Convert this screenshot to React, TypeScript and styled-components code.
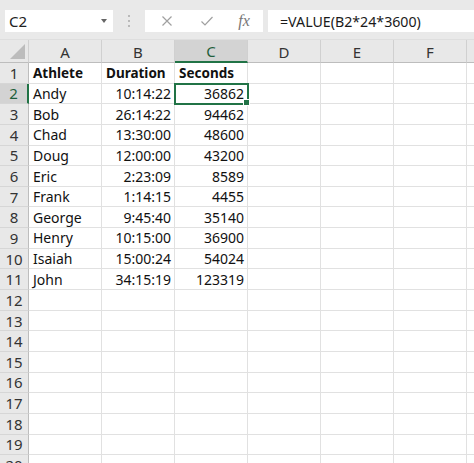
import React from "react";
import styled, { createGlobalStyle } from "styled-components";

const Global = createGlobalStyle`
  html, body { margin: 0; padding: 0; background: #ffffff; }
  body { font-family: "Noto Sans", "Open Sans", sans-serif; overflow: hidden; }
`;

const GREEN = "#217346";
const GRID = "#e1e1e1";
const HEAD_BG = "#e8e8e8";
const ROW_H = 20.65;

const Window = styled.div`
  width: 474px;
  height: 463px;
  overflow: hidden;
  display: flex;
  flex-direction: column;
  background: #fff;
`;

const Toolbar = styled.div`
  height: 40px;
  flex: none;
  background: #e9e9e9;
  display: flex;
  align-items: flex-start;
  padding: 10px 0 0 5px;
  box-sizing: border-box;
  border-bottom: 1px solid #dedede;
`;

const NameBox = styled.div`
  width: 108px;
  height: 22px;
  background: #fff;
  display: flex;
  align-items: center;
  justify-content: space-between;
  padding: 0 6px 0 4px;
  box-sizing: border-box;
  font-size: 15px;
  color: #222;
`;

const Caret = styled.span`
  width: 0;
  height: 0;
  border-left: 3.5px solid transparent;
  border-right: 3.5px solid transparent;
  border-top: 4px solid #666;
`;

const Grip = styled.div`
  width: 32px;
  height: 22px;
  display: flex;
  flex-direction: column;
  align-items: center;
  justify-content: center;
  gap: 3px;
  & > span {
    width: 2px;
    height: 2px;
    background: #a8a8a8;
    border-radius: 1px;
  }
`;

const FxButtons = styled.div`
  width: 118px;
  height: 22px;
  background: #fff;
  display: flex;
  align-items: center;
  box-sizing: border-box;
  margin-right: 5px;
`;

const FxIcon = styled.span<{ $x: number }>`
  width: ${(p) => p.$x}px;
  display: flex;
  justify-content: center;
  align-items: center;
  color: #9a9a9a;
  font-size: 15px;
`;

const FxText = styled.span`
  font-family: "Liberation Serif", "DejaVu Serif", serif;
  font-style: italic;
  font-size: 16px;
  color: #777;
`;

const FormulaInput = styled.div`
  flex: 1;
  height: 22px;
  background: #fff;
  display: flex;
  align-items: center;
  padding-left: 12px;
  font-size: 14.2px;
  color: #1a1a1a;
  white-space: nowrap;
`;

const Sheet = styled.div`
  display: grid;
  grid-template-columns: 29px repeat(7, 73px);
  grid-template-rows: 23px;
  grid-auto-rows: ${ROW_H}px;
  font-size: 14px;
  color: #111;
`;

const Corner = styled.div`
  background: ${HEAD_BG};
  border-right: 1px solid #d0d0d0;
  border-bottom: 1px solid #bdbdbd;
  position: relative;
  &::after {
    content: "";
    position: absolute;
    right: 3px;
    bottom: 3px;
    width: 0;
    height: 0;
    border-left: 15px solid transparent;
    border-bottom: 15px solid #bcbcbc;
  }
`;

const ColHeader = styled.div<{ $sel?: boolean }>`
  background: ${(p) => (p.$sel ? "#d3d3d3" : HEAD_BG)};
  border-right: 1px solid #d0d0d0;
  border-bottom: ${(p) => (p.$sel ? `2px solid ${GREEN}` : "1px solid #bdbdbd")};
  display: flex;
  align-items: center;
  justify-content: center;
  font-size: 15px;
  color: ${(p) => (p.$sel ? "#1f5f3c" : "#333")};
  box-sizing: border-box;
  padding-top: 1px;
`;

const RowHeader = styled.div<{ $sel?: boolean }>`
  background: ${(p) => (p.$sel ? "#d3d3d3" : HEAD_BG)};
  border-right: ${(p) => (p.$sel ? `2px solid ${GREEN}` : "1px solid #bdbdbd")};
  border-bottom: 1px solid #d6d6d6;
  display: flex;
  align-items: center;
  justify-content: center;
  font-size: 15px;
  color: ${(p) => (p.$sel ? "#1f5f3c" : "#333")};
  box-sizing: border-box;
`;

const Cell = styled.div<{ $num?: boolean; $bold?: boolean; $active?: boolean }>`
  border-right: 1px solid ${GRID};
  border-bottom: 1px solid ${GRID};
  display: flex;
  align-items: center;
  justify-content: ${(p) => (p.$num ? "flex-end" : "flex-start")};
  padding: 0 3px 0 4px;
  font-weight: ${(p) => (p.$bold ? 700 : 400)};
  font-size: ${(p) => (p.$bold ? "13.5px" : "14px")};
  white-space: nowrap;
  overflow: visible;
  box-sizing: border-box;
  position: relative;
  ${(p) =>
    p.$active
      ? `
    outline: 2px solid ${GREEN};
    outline-offset: -1px;
    z-index: 2;
    &::after {
      content: "";
      position: absolute;
      right: -3px;
      bottom: -3px;
      width: 5px;
      height: 5px;
      background: ${GREEN};
      border: 1px solid #fff;
    }
  `
      : ""}
`;

type Row = [string, string, string];
const data: Row[] = [
  ["Andy", "10:14:22", "36862"],
  ["Bob", "26:14:22", "94462"],
  ["Chad", "13:30:00", "48600"],
  ["Doug", "12:00:00", "43200"],
  ["Eric", "2:23:09", "8589"],
  ["Frank", "1:14:15", "4455"],
  ["George", "9:45:40", "35140"],
  ["Henry", "10:15:00", "36900"],
  ["Isaiah", "15:00:24", "54024"],
  ["John", "34:15:19", "123319"],
];

const cols = ["A", "B", "C", "D", "E", "F", "G"];

export default function App() {
  const rows: React.ReactNode[] = [];
  for (let r = 1; r <= 20; r++) {
    rows.push(
      <RowHeader key={`h${r}`} $sel={r === 2}>
        {r}
      </RowHeader>
    );
    cols.forEach((c, ci) => {
      let text = "";
      let num = false;
      let bold = false;
      if (r === 1) {
        if (ci === 0) text = "Athlete";
        if (ci === 1) text = "Duration";
        if (ci === 2) text = "Seconds";
        bold = ci < 3;
      } else if (r - 2 < data.length && ci < 3) {
        text = data[r - 2][ci];
        num = ci > 0;
      }
      rows.push(
        <Cell key={`${c}${r}`} $num={num} $bold={bold} $active={r === 2 && c === "C"}>
          {text}
        </Cell>
      );
    });
  }

  return (
    <Window>
      <Global />
      <Toolbar>
        <NameBox>
          <span>C2</span>
          <Caret />
        </NameBox>
        <Grip>
          <span />
          <span />
          <span />
        </Grip>
        <FxButtons>
          <FxIcon $x={44}>
            <svg width="12" height="12" viewBox="0 0 12 12">
              <path d="M1.5 1.5 L10.5 10.5 M10.5 1.5 L1.5 10.5" stroke="#a0a0a0" strokeWidth="1.2" fill="none" />
            </svg>
          </FxIcon>
          <FxIcon $x={36}>
            <svg width="14" height="12" viewBox="0 0 14 12">
              <path d="M1.5 6.5 L5 10 L12.5 2" stroke="#a0a0a0" strokeWidth="1.2" fill="none" />
            </svg>
          </FxIcon>
          <FxIcon $x={38}>
            <FxText>fx</FxText>
          </FxIcon>
        </FxButtons>
        <FormulaInput>=VALUE(B2*24*3600)</FormulaInput>
      </Toolbar>
      <Sheet>
        <Corner />
        {cols.map((c) => (
          <ColHeader key={c} $sel={c === "C"}>
            {c === "G" ? "" : c}
          </ColHeader>
        ))}
        {rows}
      </Sheet>
    </Window>
  );
}
